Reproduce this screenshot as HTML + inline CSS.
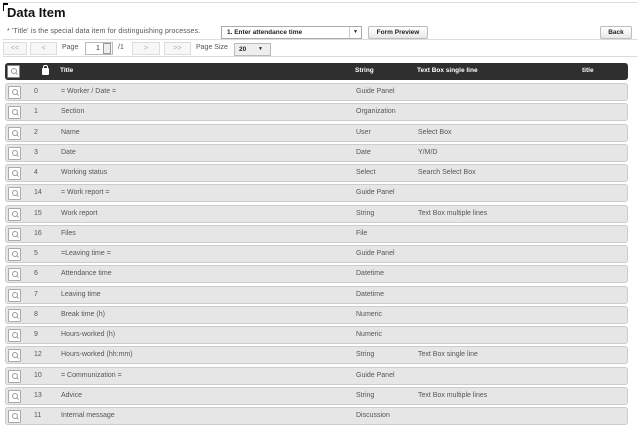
<!DOCTYPE html>
<html><head><style>
*{margin:0;padding:0;box-sizing:border-box}
body{width:640px;height:430px;background:#fff;font-family:"Liberation Sans",sans-serif;font-size:7px;color:#444;position:relative;overflow:hidden}
.a{position:absolute}
.btn{position:absolute;border:1px solid #bbb;background:linear-gradient(#fff,#e8e8e8);border-radius:2px;font-weight:bold;font-size:6.5px;color:#222;text-align:center;line-height:11px}
.pg{position:absolute;top:42px;height:13px;border:1px solid #ddd;background:#f7f7f7;color:#aaa;text-align:center;line-height:11px;font-size:7px}
.row{position:absolute;left:5px;width:623px;height:18px;background:#e6e6e6;border:1px solid #ccc;border-radius:3px}
.row span{position:absolute;top:4px;font-size:7px;color:#555}
.ic{position:absolute;left:2px;top:2px;width:13px;height:13px;border:1px solid #aaa;background:#fff;border-radius:1px}
.ic:before{content:"";position:absolute;left:3px;top:2px;width:4px;height:4px;border:1px solid #999;border-radius:50%}
.ic:after{content:"";position:absolute;left:7px;top:7px;width:3px;height:1px;background:#999;transform:rotate(45deg)}
</style></head><body>
<div class="a" style="left:3px;top:2px;width:634px;height:1px;background:#ddd"></div>
<div class="a" style="left:3px;top:3px;width:1px;height:8px;background:#000"></div>
<div class="a" style="left:3px;top:3px;width:5px;height:2px;background:#000"></div>
<div class="a" style="left:7px;top:5px;font-size:13px;font-weight:bold;color:#111">Data Item</div>
<div class="a" style="left:7px;top:28px;font-size:7px;color:#555;letter-spacing:0.15px">* 'Title' is the special data item for distinguishing processes.</div>
<div class="a" style="left:221px;top:26px;width:141px;height:13px;border:1px solid #aaa;background:#fff;font-size:6.5px;font-weight:bold;color:#222;line-height:11px;padding-left:5px">1. Enter attendance time<span style="position:absolute;right:0;top:0;width:12px;border-left:1px solid #ccc;text-align:center;font-size:5px">▼</span></div>
<div class="btn" style="left:368px;top:26px;width:60px;height:13px">Form Preview</div>
<div class="btn" style="left:600px;top:26px;width:32px;height:13px">Back</div>
<div class="a" style="left:3px;top:39px;width:634px;height:1px;background:#ddd"></div>
<div class="pg" style="left:3px;width:24px">&lt;&lt;</div>
<div class="pg" style="left:30px;width:27px">&lt;</div>
<div class="a" style="left:62px;top:44px;color:#555">Page</div>
<div class="a" style="left:85px;top:42px;width:28px;height:13px;border:1px solid #bbb;background:#fff;font-size:7px;line-height:11px;padding-left:10px;color:#333">1</div>
<div class="a" style="left:103px;top:43px;width:8px;height:11px;border:1px solid #999;background:#eee"></div>
<div class="a" style="left:118px;top:44px;color:#555">/1</div>
<div class="pg" style="left:132px;width:28px">&gt;</div>
<div class="pg" style="left:164px;width:27px">&gt;&gt;</div>
<div class="a" style="left:196px;top:44px;color:#555">Page Size</div>
<div class="a" style="left:234px;top:43px;width:37px;height:13px;border:1px solid #bbb;background:#eee;font-weight:bold;line-height:11px;padding-left:4px;color:#222;font-size:6.5px">20<span style="position:absolute;left:23px;font-size:5px">▼</span></div>
<div class="a" style="left:3px;top:56px;width:634px;height:1px;background:#ddd"></div>
<div class="a" style="left:5px;top:63px;width:623px;height:17px;background:#2f2f2f;border-radius:3px;color:#fff;font-weight:bold;font-size:6.5px">
<div class="ic" style="top:2px;border-color:#888"></div>
<span class="a" style="left:37px;top:5px;width:7px;height:7px;background:#fff;border-radius:1px"></span>
<span class="a" style="left:38px;top:2px;width:5px;height:4px;border:1px solid #fff;border-bottom:none;border-radius:2px 2px 0 0"></span>
<span class="a" style="left:55px;top:4px">Title</span>
<span class="a" style="left:350px;top:4px">String</span>
<span class="a" style="left:412px;top:4px">Text Box single line</span>
<span class="a" style="left:577px;top:4px">title</span>
</div>
<div id="rows"></div>
<script>
var d=[["0","= Worker / Date =","Guide Panel",""],["1","Section","Organization",""],["2","Name","User","Select Box"],["3","Date","Date","Y/M/D"],["4","Working status","Select","Search Select Box"],["14","= Work report =","Guide Panel",""],["15","Work report","String","Text Box multiple lines"],["16","Files","File",""],["5","=Leaving time =","Guide Panel",""],["6","Attendance time","Datetime",""],["7","Leaving time","Datetime",""],["8","Break time (h)","Numeric",""],["9","Hours-worked (h)","Numeric",""],["12","Hours-worked (hh:mm)","String","Text Box single line"],["10","= Communization =","Guide Panel",""],["13","Advice","String","Text Box multiple lines"],["11","Internal message","Discussion",""]];
var h="";d.forEach(function(r,i){var t=Math.round(83+i*20.25);h+='<div class="row" style="top:'+t+'px"><div class="ic"></div><span style="left:28px">'+r[0]+'</span><span style="left:55px">'+r[1]+'</span><span style="left:350px">'+r[2]+'</span><span style="left:412px">'+r[3]+'</span></div>';});
document.getElementById("rows").innerHTML=h;
</script>
</body></html>
